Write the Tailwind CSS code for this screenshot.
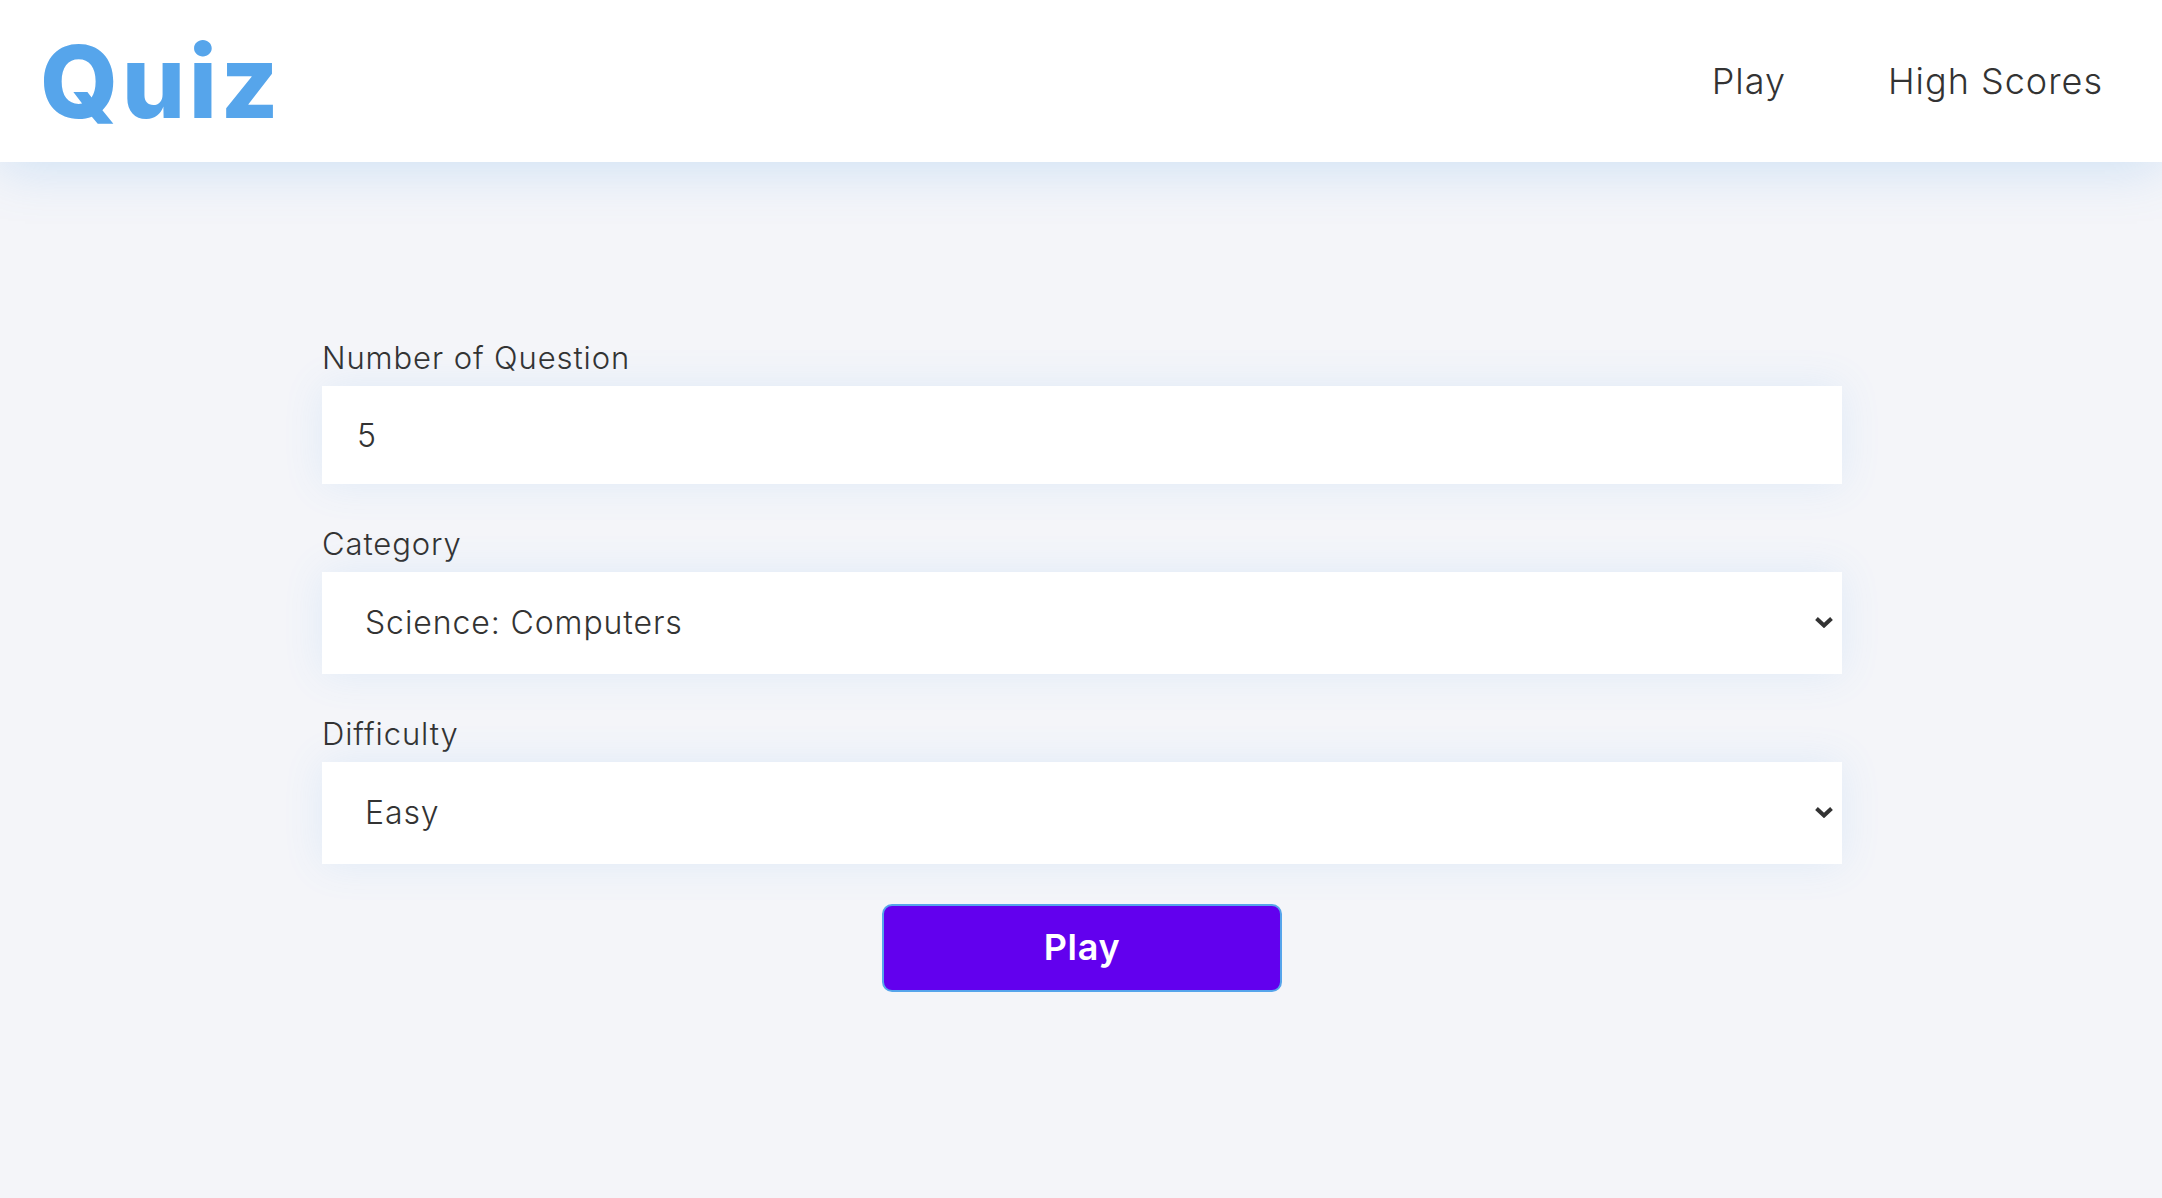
<!DOCTYPE html>
<html>
<head>
    <title>Quiz</title>
    <script src="https://cdn.jsdelivr.net/npm/@tailwindcss/browser@4"></script>
</head>
<body class="bg-[#f4f5f9] min-h-screen font-['Inter',sans-serif] text-[#333]">
    <!-- Navbar -->
    <nav class="relative bg-white h-[162px] flex items-center justify-between pl-[40px] pr-[59px] shadow-[0_5px_50px_rgba(86,165,235,0.25)]">
        <a href="#" class="text-[100px] leading-none font-extrabold text-[#56a5eb] tracking-[3.5px] mt-[2px]">Quiz</a>
        <div class="flex items-center gap-[102px] text-[36px] font-light tracking-[1px]">
            <a href="#">Play</a>
            <a href="#">High Scores</a>
        </div>
    </nav>

    <!-- Form -->
    <form class="w-[1520px] ml-[322px] mt-[172px] flex flex-col">
        <label class="text-[31px] leading-[48px] font-light tracking-[0.9px] mb-[4px]">Number of Question</label>
        <input type="number" value="5" class="h-[98px] bg-white pl-[35px] text-[32px] font-light outline-none shadow-[0_0_40px_rgba(86,165,235,0.12)]">

        <label class="text-[31px] leading-[48px] font-light tracking-[0.9px] mt-[36px] mb-[4px]">Category</label>
        <div class="relative">
            <select class="w-full h-[102px] appearance-none bg-white pl-[43px] text-[32px] font-light tracking-[0.9px] outline-none shadow-[0_0_40px_rgba(86,165,235,0.12)]">
                <option>Science: Computers</option>
            </select>
            <svg class="absolute right-[9px] top-[44px] w-[18px] h-[12px] pointer-events-none" viewBox="0 0 18 12" fill="none" stroke="#333" stroke-width="4"><path d="M1.5 2.5 9 9.5l7.5-7"/></svg>
        </div>

        <label class="text-[31px] leading-[48px] font-light tracking-[0.9px] mt-[36px] mb-[4px]">Difficulty</label>
        <div class="relative">
            <select class="w-full h-[102px] appearance-none bg-white pl-[43px] text-[32px] font-light tracking-[0.9px] outline-none shadow-[0_0_40px_rgba(86,165,235,0.12)]">
                <option>Easy</option>
            </select>
            <svg class="absolute right-[9px] top-[44px] w-[18px] h-[12px] pointer-events-none" viewBox="0 0 18 12" fill="none" stroke="#333" stroke-width="4"><path d="M1.5 2.5 9 9.5l7.5-7"/></svg>
        </div>

        <button type="button" class="w-[400px] h-[88px] mx-auto mt-[40px] pb-[2px] bg-[#6200ee] border-2 border-[#56a5eb] rounded-[10px] text-white text-[36px] font-semibold tracking-[0.7px]">Play</button>
    </form>
</body>
</html>
